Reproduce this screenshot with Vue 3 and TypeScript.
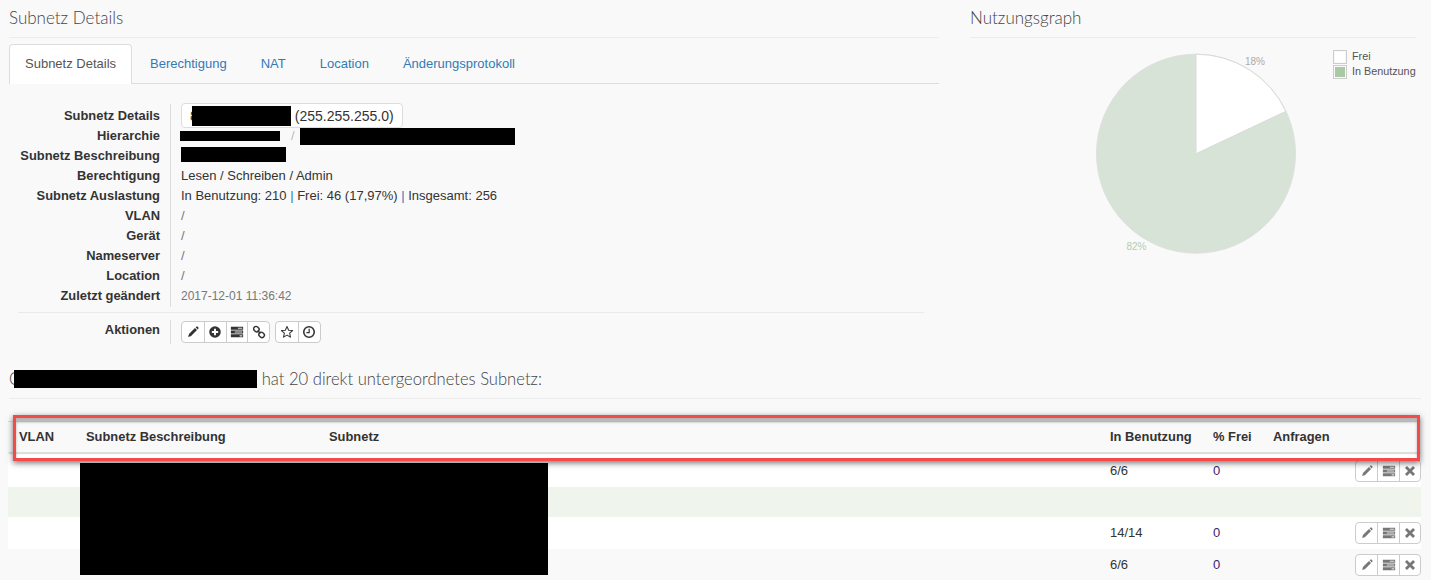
<script setup lang="ts">
type IconName = 'pencil' | 'plus' | 'tasks' | 'link' | 'star' | 'clock' | 'times'

const tabs: string[] = ['Subnetz Details', 'Berechtigung', 'NAT', 'Location', 'Änderungsprotokoll']
const plainRows: string[] = ['VLAN', 'Gerät', 'Nameserver', 'Location']
const actionsA: IconName[] = ['pencil', 'plus', 'tasks', 'link']
const actionsB: IconName[] = ['star', 'clock']
const rowActions: IconName[] = ['pencil', 'tasks', 'times']
const rows = [
  { use: '6/6', free: '0', tone: 'white', actions: true },
  { use: '', free: '', tone: 'green', actions: false },
  { use: '14/14', free: '0', tone: 'white', actions: true },
  { use: '6/6', free: '0', tone: 'plain', actions: true }
]
</script>

<template>
  <div class="page">
    <div class="top">
      <section class="left">
        <h4 class="heading">Subnetz Details</h4>
        <ul class="tabs">
          <li v-for="(t, i) in tabs" :key="t" class="tab" :class="{ active: i === 0 }">{{ t }}</li>
        </ul>
        <div class="details">
          <div class="label">Subnetz Details</div>
          <div class="value">
            <span class="addr">8<span class="black b-addr"></span>(255.255.255.0)</span>
          </div>
          <div class="label">Hierarchie</div>
          <div class="value hier">
            <span class="black b-h1"></span><span class="slash">/</span><span class="black b-h2"></span>
          </div>
          <div class="label">Subnetz Beschreibung</div>
          <div class="value"><span class="black b-desc"></span></div>
          <div class="label">Berechtigung</div>
          <div class="value">Lesen / Schreiben / Admin</div>
          <div class="label">Subnetz Auslastung</div>
          <div class="value">In Benutzung: 210 <i>|</i> Frei: 46 (17,97%) <i>|</i> Insgesamt: 256</div>
          <template v-for="r in plainRows" :key="r">
            <div class="label">{{ r }}</div>
            <div class="value muted">/</div>
          </template>
          <div class="label">Zuletzt geändert</div>
          <div class="value date">2017-12-01 11:36:42</div>
        </div>
        <hr class="rule" />
        <div class="actions">
          <div class="label act-label">Aktionen</div>
          <div class="act-buttons">
            <div v-for="(group, g) in [actionsA, actionsB]" :key="g" class="btn-group">
              <span v-for="n in group" :key="n" class="btn">
                <svg viewBox="0 0 16 16" class="icon">
                  <use :href="'#i-' + n" />
                </svg>
              </span>
            </div>
          </div>
        </div>
      </section>

      <section class="right">
        <h4 class="heading">Nutzungsgraph</h4>
        <div class="graph">
          <svg class="pie" width="446" height="222" viewBox="0 0 446 222">
            <circle cx="226" cy="115.7" r="99.5" fill="#d6e3d6" stroke="#e0e0e0" stroke-width="1" />
            <path d="M226 115.7 L226 16.2 A99.5 99.5 0 0 1 315.9 73.3 Z" fill="#ffffff" stroke="#dadada" stroke-width="1" />
            <text x="285" y="27" class="pct grey">18%</text>
            <text x="166.5" y="212" class="pct green">82%</text>
          </svg>
          <div class="legend">
            <div class="leg-row"><span class="swatch"><b class="s-free"></b></span>Frei</div>
            <div class="leg-row"><span class="swatch"><b class="s-used"></b></span>In Benutzung</div>
          </div>
        </div>
      </section>
    </div>

    <h4 class="sub-title">C<span class="black b-title"></span> hat 20 direkt untergeordnetes Subnetz:</h4>

    <div class="table">
      <div class="row head">
        <span>VLAN</span>
        <span>Subnetz Beschreibung</span>
        <span>Subnetz</span>
        <span>In Benutzung</span>
        <span>% Frei</span>
        <span>Anfragen</span>
        <span></span>
      </div>
      <div v-for="(r, i) in rows" :key="i" class="row body" :class="r.tone">
        <span></span>
        <span></span>
        <span></span>
        <span>{{ r.use }}</span>
        <span class="free">{{ r.free }}</span>
        <span></span>
        <span class="row-btns">
          <span v-if="r.actions" class="btn-group">
            <span v-for="n in rowActions" :key="n" class="btn small">
              <svg viewBox="0 0 16 16" class="icon faded">
                <use :href="'#i-' + n" />
              </svg>
            </span>
          </span>
        </span>
      </div>
      <div class="callout"></div>
      <div class="black b-table"></div>
    </div>

    <svg width="0" height="0" class="defs">
      <defs>
        <symbol id="i-pencil" viewBox="0 0 16 16">
          <path d="M3.4 10.2 10.2 3.4 12.6 5.8 5.8 12.6 2.4 13.6Z" fill="currentColor" />
          <path d="M11 2.6 11.9 1.8C12.3 1.5 12.8 1.5 13.1 1.8L14.2 2.9C14.5 3.2 14.5 3.7 14.2 4.1L13.4 5Z" fill="currentColor" />
        </symbol>
        <symbol id="i-plus" viewBox="0 0 16 16">
          <circle cx="8" cy="8" r="6.6" fill="currentColor" />
          <path d="M8 4.4V11.6M4.4 8H11.6" stroke="#fff" stroke-width="2.2" />
        </symbol>
        <symbol id="i-tasks" viewBox="0 0 16 16">
          <path d="M1 2H15V5.4H1ZM1 6.4H15V9.6H1ZM1 10.6H15V14H1Z" fill="currentColor" />
          <path d="M9 3H14V4.4H9ZM5.5 7.3H14V8.7H5.5ZM11 11.6H14V13H11Z" fill="#ddd" />
        </symbol>
        <symbol id="i-link" viewBox="0 0 16 16">
          <g fill="none" stroke="currentColor" stroke-width="1.7">
            <rect x="1.8" y="2" width="6.4" height="5.4" rx="2.6" transform="rotate(42 5 4.7)" />
            <rect x="7.8" y="8.6" width="6.4" height="5.4" rx="2.6" transform="rotate(42 11 11.3)" />
            <path d="M6.4 6.2 9.6 9.8" />
          </g>
        </symbol>
        <symbol id="i-star" viewBox="0 0 16 16">
          <path d="M8 1.8 9.9 5.9 14.4 6.4 11 9.4 12 13.9 8 11.6 4 13.9 5 9.4 1.6 6.4 6.1 5.9Z" fill="none" stroke="currentColor" stroke-width="1.2" stroke-linejoin="round" />
        </symbol>
        <symbol id="i-clock" viewBox="0 0 16 16">
          <circle cx="8" cy="8" r="6" fill="none" stroke="currentColor" stroke-width="1.8" />
          <path d="M8.2 4.2V8.6H5" fill="none" stroke="currentColor" stroke-width="1.4" />
        </symbol>
        <symbol id="i-times" viewBox="0 0 16 16">
          <path d="M3.4 3.4 12.6 12.6M12.6 3.4 3.4 12.6" stroke="currentColor" stroke-width="3.2" />
        </symbol>
      </defs>
    </svg>
  </div>
</template>

<style scoped>
.page {
  position: relative;
  width: 1431px;
  height: 580px;
  overflow: hidden;
  background: #f9f9f9;
  color: #333;
  font-family: "Liberation Sans", Arial, sans-serif;
  font-size: 13px;
  line-height: 20px;
}
.top {
  display: flex;
  height: 360px;
  padding-left: 9px;
}
.left {
  width: 930px;
}
.right {
  width: 446px;
  margin-left: 31px;
}
.heading {
  margin: 0;
  height: 37px;
  border-bottom: 1px solid #ececec;
  font-family: Lato, sans-serif;
  font-weight: 300;
  font-size: 17px;
  line-height: 36px;
  color: #444;
}
.tabs {
  display: flex;
  list-style: none;
  margin: 6px 0 0;
  padding: 0;
  height: 39px;
  border-bottom: 1px solid #ddd;
}
.tab {
  padding: 9px 15px 0;
  margin-right: 2px;
  border: 1px solid transparent;
  border-bottom: 0;
  height: 40px;
  box-sizing: border-box;
  color: #337ab7;
  font-size: 13px;
}
.tab.active {
  background: #fff;
  color: #555;
  border-color: #ddd;
  border-radius: 4px 4px 0 0;
}
.details {
  display: grid;
  grid-template-columns: 151px 1fr;
  grid-auto-rows: 20px;
  margin-top: 22px;
  position: relative;
}
.details::before {
  content: "";
  position: absolute;
  left: 161px;
  top: -2px;
  height: 203px;
  border-left: 1px solid #ddd;
}
.label {
  text-align: right;
  font-weight: 700;
  font-size: 12.9px;
  white-space: nowrap;
}
.value {
  padding-left: 21px;
  white-space: nowrap;
  position: relative;
}
.value i {
  font-style: normal;
  color: #337ab7;
}
.muted {
  color: #777;
}
.date {
  color: #777;
  font-size: 12px;
}
.addr {
  display: inline-flex;
  align-items: center;
  position: relative;
  top: -3px;
  height: 25px;
  box-sizing: border-box;
  padding: 0 8px;
  background: #fff;
  border: 1px solid #ddd;
  border-radius: 4px;
  font-size: 14px;
}
.black {
  display: inline-block;
  background: #000;
}
.b-addr {
  width: 99px;
  height: 20px;
  margin: 0 4px 0 -6px;
}
.hier {
  display: flex;
  align-items: center;
}
.b-h1 {
  width: 100px;
  height: 10px;
  margin-left: -1px;
}
.slash {
  margin: 0 5px 0 11px;
  color: #bbb;
}
.b-h2 {
  width: 215px;
  height: 17px;
}
.b-desc {
  width: 105px;
  height: 15px;
  margin-top: 1px;
}
.rule {
  margin: 6px 15px 0 9px;
  border: 0;
  border-top: 1px solid #eaeaea;
}
.actions {
  display: grid;
  grid-template-columns: 151px 1fr;
  margin-top: 7px;
}
.act-buttons {
  display: flex;
  gap: 5px;
  margin-left: 10px;
  padding: 1px 0 1px 10px;
  border-left: 1px solid #ddd;
}
.btn-group {
  display: inline-flex;
  background: #fff;
  border: 1px solid #ccc;
  border-radius: 4px;
  height: 22px;
  box-sizing: border-box;
}
.btn {
  display: flex;
  align-items: center;
  justify-content: center;
  box-sizing: border-box;
  width: 21.75px;
  border-left: 1px solid #ccc;
  color: #333;
}
.btn:first-child {
  border-left: 0;
}
.btn.small {
  width: 21.33px;
}
.icon {
  width: 14px;
  height: 14px;
}
.faded {
  color: #777;
}
.defs {
  position: absolute;
}
.graph {
  position: relative;
}
.pie {
  display: block;
}
.pct {
  font-size: 10px;
  font-family: "Liberation Sans", Arial, sans-serif;
  text-anchor: middle;
}
.pct.grey {
  fill: #aaa;
}
.pct.green {
  fill: #b3cdb3;
}
.legend {
  position: absolute;
  left: 363px;
  top: 11px;
  font-size: 10.8px;
  line-height: 15px;
  color: #545454;
}
.leg-row {
  display: flex;
  align-items: center;
  gap: 5px;
  height: 15px;
}
.swatch {
  width: 14px;
  height: 14px;
  box-sizing: border-box;
  padding: 1px;
  border: 1px solid #ccc;
}
.swatch b {
  display: block;
  width: 100%;
  height: 100%;
}
.s-free {
  background: #fff;
}
.s-used {
  background: #a9c9a4;
}
.sub-title {
  margin: 0 10px 0 9px;
  height: 38px;
  border-bottom: 1px solid #ececec;
  font-family: Lato, sans-serif;
  font-weight: 300;
  font-size: 16.6px;
  line-height: 38px;
  color: #444;
  white-space: nowrap;
}
.b-title {
  width: 243px;
  height: 18px;
  margin-left: -6px;
  vertical-align: -3px;
}
.table {
  position: relative;
  margin: 22px 10px 0 8px;
}
.row {
  display: grid;
  grid-template-columns: 67px 243px 781px 103px 60px 1fr 66px;
  padding-left: 11px;
  align-items: center;
}
.head {
  height: 30px;
  font-weight: 700;
  font-size: 12.9px;
  border-bottom: 1px solid #ddd;
  border-top: 1px solid #ddd;
  margin-bottom: 2px;
  box-shadow: 0 2px 0 -1px #ddd;
}
.body {
  height: 32px;
}
.body.white {
  background: #fff;
}
.body.green {
  background: #eff4ed;
  height: 30px;
}
.free {
  color: #3b1d6e;
}
.row-btns {
  display: flex;
  justify-content: flex-end;
}
.callout {
  position: absolute;
  left: 5px;
  right: 1px;
  top: -6px;
  height: 46px;
  box-sizing: border-box;
  border: 3px solid #f44a4a;
  box-shadow: 0 2px 6px rgba(0, 0, 0, 0.55), inset 0 4px 3px rgba(0, 0, 0, 0.28);
  pointer-events: none;
}
.b-table {
  position: absolute;
  left: 72px;
  top: 42px;
  width: 468px;
  height: 112px;
}
</style>

<style>
body {
  margin: 0;
  background: #f9f9f9;
}
</style>
